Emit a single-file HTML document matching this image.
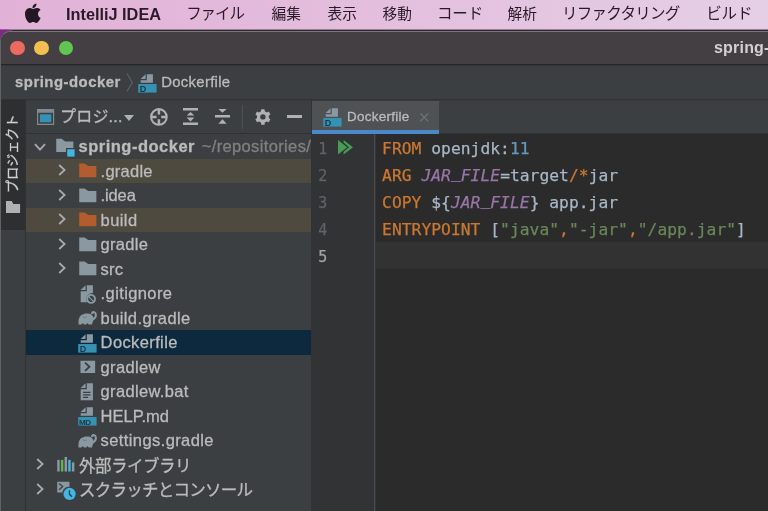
<!DOCTYPE html>
<html lang="ja">
<head>
<meta charset="utf-8">
<title>spring-docker – Dockerfile</title>
<style>
*{box-sizing:border-box;margin:0;padding:0}
html,body{width:768px;height:511px;overflow:hidden}
body{position:relative;background:#30282f;font-family:"Liberation Sans","Noto Sans CJK JP",sans-serif;color:#bbbbbb}
.abs,#in>div{position:absolute}
svg{position:absolute;overflow:visible}
#wall{left:0;top:29px;width:12px;height:14px;background:#7a2b82}
#mshadow{left:0;top:29px;width:768px;height:1px;background:linear-gradient(90deg,#a9559f 0,#a9559f 6px,#9c7c97 12px,#9c7c97 100%)}
#menubar{will-change:transform;left:0;top:0;width:768px;height:29px;background:linear-gradient(90deg,#e2b1d7 0%,#e3bcdc 40%,#e5cfe6 100%)}
#menubar span{position:absolute;top:0;height:29px;line-height:28px;font-size:14.7px;color:#2a1a28;white-space:nowrap}
#menubar .app{font-weight:bold;font-size:16.3px;left:66px;line-height:28px}
#menubar .kana{font-size:15.5px;letter-spacing:-.15px}
#win{left:0;top:31px;width:780px;height:490px;border-radius:10px 0 0 0;background:#3c3f41;overflow:hidden;border-left:1px solid #626364;border-top:1px solid #7a777a}
#in{will-change:transform;position:absolute;left:-1px;top:-32px;width:780px;height:520px}
#titlebar{left:0;top:32px;width:780px;height:32px;background:#433f43}
#titlebar .t{position:absolute;left:714px;top:0;line-height:32px;font-size:16px;font-weight:bold;color:#d4d1d4;white-space:nowrap;letter-spacing:.2px}
.dot{position:absolute;width:14.6px;height:14.6px;border-radius:50%;top:8.6px}
#tline{left:0;top:64px;width:780px;height:2px;background:linear-gradient(#272627 0,#272627 50%,#343537 50%,#343537 100%)}
#nav{left:0;top:66px;width:780px;height:33px;background:#3c3f41}
#nav .p{position:absolute;left:15px;top:-.5px;line-height:33px;font-size:14.9px;font-weight:bold;color:#bbbbbb;letter-spacing:.5px;white-space:nowrap}
#nav .f{position:absolute;left:161.2px;top:-.5px;line-height:33px;font-size:14.9px;color:#bbbbbb;letter-spacing:.3px}
#nline{left:0;top:99px;width:780px;height:2px;background:linear-gradient(#323232 0,#323232 50%,rgba(50,50,50,.4) 50%,rgba(50,50,50,.4) 100%)}
#tbline{left:439px;top:133px;width:340px;height:1px;background:#323232}
#stripe{left:1px;top:100px;width:24px;height:420px;background:#3c3f41}
#stripebtn{left:1px;top:100px;width:24px;height:130px;background:#2d2f30}
#sline{left:25px;top:100px;width:1px;height:420px;background:#323232}
#stripetxt{left:4px;top:193px;width:82px;height:17px;line-height:17px;font-size:13.1px;color:#d0d0d0;white-space:nowrap;transform-origin:0 0;transform:rotate(-90deg)}
#thead{left:26px;top:100px;width:285px;height:33px;background:#3c3f41}
#thead .ttl{position:absolute;left:34px;top:0;line-height:33px;font-size:16px;color:#bbbbbb;white-space:nowrap;letter-spacing:.2px}
#thline{left:26px;top:133px;width:285px;height:1px;background:#323232}
.rowbg{position:absolute;left:26px;width:285px;height:24.5px}
.rowbg.ex{background:#4e4a40}
.rowbg.sel{background:#0d293e}
.lbl{-webkit-text-stroke:.3px #bbbbbb;position:absolute;height:24.5px;line-height:24.5px;font-size:16.5px;color:#bbbbbb;white-space:nowrap;letter-spacing:.12px;margin-top:-0.2px}
.lbl.b{font-weight:bold;letter-spacing:.5px}
.lbl.j{letter-spacing:-.3px;margin-top:.8px;margin-left:.5px}
.gray{-webkit-text-stroke:.3px #808080;color:#808080;font-weight:normal;letter-spacing:.36px;margin-left:1.6px}
#split{left:311px;top:100px;width:1px;height:420px;background:#323232}
#tabs{left:312px;top:100px;width:470px;height:34px;background:#3c3f41}
#tab{left:312px;top:101px;width:127px;height:33px;background:#4e5254}
#tab .n{position:absolute;left:35px;top:0;line-height:31px;font-size:13.4px;color:#bbbbbb;letter-spacing:.3px}
#tabul{left:312px;top:130px;width:127px;height:4px;background:#4a88c7}
#gutter{left:312px;top:134px;width:63px;height:390px;background:#313335}
#gsep{left:374px;top:134px;width:2px;height:390px;background:linear-gradient(90deg,#4b4b4d 0,#4b4b4d 50%,#353536 50%,#353536 100%)}
#editor{left:375px;top:134px;width:400px;height:390px;background:#2b2b2b}
#caret{left:375px;top:242px;width:400px;height:27px;background:#323232}
.ln{position:absolute;left:318.3px;margin-top:1px;font-family:"DejaVu Sans Mono","Liberation Mono",monospace;font-size:15px;line-height:27px;height:27px;color:#606366}
.code{position:absolute;left:382.1px;font-family:"DejaVu Sans Mono","Liberation Mono",monospace;font-size:16.28px;letter-spacing:.04px;line-height:27px;height:27px;color:#a9b7c6;white-space:pre}
#nav span,#tab .n,#thead .ttl,#stripetxt{-webkit-text-stroke-width:.3px}
.code,.ln{-webkit-text-stroke-width:.25px}
.u{position:relative;top:-2.5px}
.k{color:#cc7832}.n{color:#6897bb}.v{color:#9876aa;font-style:italic}.s{color:#6a8759}
</style>
</head>
<body>
<div id="wall" class="abs"></div>
<div id="mshadow" class="abs"></div>
<div id="menubar" class="abs">
<svg style="left:23.800px;top:3.100px" width="18.200" height="21.400" viewBox="0 0 170 200"><path fill="#231822" d="M150.4 68.2c-1 .8-19.400 11.100-19.400 34.100 0 26.600 23.400 36 24.100 36.200-.1.600-3.700 12.900-12.300 25.400-7.700 11-15.700 22-27.900 22s-15.300-7.100-29.400-7.100c-13.700 0-18.600 7.300-29.700 7.300s-18.900-10.200-27.800-22.700C17.700 148.700 9.300 125 9.300 102.500c0-36.100 23.500-55.200 46.600-55.200 12.300 0 22.500 8.100 30.200 8.100 7.300 0 18.800-8.600 32.700-8.600 5.300 0 24.300.5 36.800 18.400zM107 34.500c5.800-6.900 9.900-16.400 9.900-25.900 0-1.300-.1-2.700-.3-3.700-9.400.4-20.600 6.300-27.300 14.100-5.300 6-10.200 15.600-10.200 25.200 0 1.400.2 2.900.3 3.300.6.100 1.600.2 2.500.2 8.400.1 19.100-5.600 25.100-13.200z"/></svg>
<span class="app">IntelliJ IDEA</span>
<span class="kana" style="left:186.200px;letter-spacing:-1.100px">ファイル</span>
<span style="left:271.5px">編集</span>
<span style="left:327.5px">表示</span>
<span style="left:382.5px">移動</span>
<span class="kana" style="left:437px">コード</span>
<span style="left:507.5px">解析</span>
<span class="kana" style="left:562px;letter-spacing:-.75px">リファクタリング</span>
<span class="kana" style="left:706.200px">ビルド</span>
</div>

<div id="win" class="abs"><div id="in">
<div id="titlebar">
<div class="dot" style="left:10px;background:#ed6a5e"></div>
<div class="dot" style="left:34.400px;background:#f5bf4f"></div>
<div class="dot" style="left:58.800px;background:#61c554"></div>
<div class="t">spring-docker – Dockerfile</div>
</div>
<div id="tline"></div>
<div id="nav">
<span class="p">spring-docker</span>
<svg style="left:126px;top:7px" width="8" height="19" viewBox="0 0 8 19"><path d="M1 .5L6.300 9.500L1 18.500" fill="none" stroke="#5f6365" stroke-width="1.100"/></svg>
<svg style="left:137.4px;top:6.7px" width="19.6" height="19.6" viewBox="0 0 16 16"><path fill="#8a98a2" d="M7 1L3 5H7Z"/><path fill="#8a98a2" d="M8 1V6H3V8H13V1Z"/><rect x="1" y="9" width="15" height="7" fill="#3592b3"/><text x="2.3" y="15.2" font-family="Liberation Sans,sans-serif" font-weight="bold" font-size="7.4" letter-spacing="0" fill="#1c3644">D</text></svg>
<span class="f">Dockerfile</span>
</div>

<div id="stripe"></div>
<div id="stripebtn"></div>
<div id="sline"></div>
<div id="stripetxt">プロジェクト</div>
<svg style="left:5.900px;top:200.800px" width="14.100" height="12" viewBox="0 0 14.100 12"><path fill="#afb1b3" d="M0 0H5.700L7.300 3.100H14.100V12H0Z"/></svg>

<div id="thead">
<span class="ttl">プロジ...</span>
</div>
<svg style="left:36.800px;top:109px" width="17.200" height="16" viewBox="0 0 17.200 16"><path fill="#7f8b91" fill-rule="evenodd" d="M0 0H17.200V16H0ZM1.200 3.700V14.800H16V3.700Z"/><rect x="2.900" y="5.300" width="11.400" height="8" fill="#3592b3"/></svg>
<svg style="left:124.300px;top:115.300px" width="10" height="6" viewBox="0 0 10 6"><path fill="#afb1b3" d="M0 0H10L5 6Z"/></svg>
<svg style="left:149.800px;top:107.600px" width="17.800" height="17.800" viewBox="-8.900 -8.900 17.800 17.800"><circle r="7.800" fill="none" stroke="#afb1b3" stroke-width="2.100"/><path stroke="#afb1b3" stroke-width="2.500" d="M0 -7.500V-2.300M0 7.500V2.300M-7.500 0H-2.300M7.500 0H2.300"/></svg>
<svg style="left:183px;top:108px" width="15" height="17" viewBox="0 0 15 17"><path fill="#afb1b3" d="M0 0H15V2.400H0ZM0 14.600H15V17H0ZM7.500 4L11.400 7.600H3.600ZM7.500 13.500L11.400 9.600H3.600Z"/></svg>
<svg style="left:215px;top:109.400px" width="15" height="15" viewBox="0 0 15 15"><path fill="#afb1b3" d="M0 6H15V8.400H0ZM7.500 3.800L11.600 0H3.400ZM7.500 10.200L11.600 14.700H3.400Z"/></svg>
<div style="left:242px;top:104.500px;width:1px;height:24.500px;background:#4e5052"></div>
<svg style="left:255px;top:108.700px" width="15.800" height="15.800" viewBox="-7.900 -7.900 15.800 15.800"><path fill="#afb1b3" fill-rule="evenodd" d="M-1.91 -5.69L-1.64 -7.73L1.64 -7.73L1.91 -5.69L3.97 -4.50L5.87 -5.29L7.51 -2.44L5.88 -1.19L5.88 1.19L7.51 2.44L5.87 5.29L3.97 4.50L1.91 5.69L1.64 7.73L-1.64 7.73L-1.91 5.69L-3.97 4.50L-5.87 5.29L-7.51 2.44L-5.88 1.19L-5.88 -1.19L-7.51 -2.44L-5.87 -5.29L-3.97 -4.50ZM2.70 0A2.70 2.70 0 1 0 -2.70 0A2.70 2.70 0 1 0 2.70 0Z"/></svg>
<div style="left:287.300px;top:115.300px;width:14.800px;height:2.500px;background:#afb1b3"></div>
<div id="thline"></div>

<svg style="left:33.6px;top:142.7px" width="12" height="8" viewBox="0 0 12 8"><path d="M1 1.200L6 6.600L11 1.200" fill="none" stroke="#a9abad" stroke-width="1.750"/></svg>
<svg style="left:55.4px;top:136.7px" width="19.6" height="19.6" viewBox="0 0 16 16"><path fill="#8a98a2" d="M1 1.500H5.3L8.4 3.600H15V9H9V12.300H1Z"/><rect x="10" y="10" width="6" height="6" fill="#40b6e0"/></svg>
<div class="lbl b" style="left:78.5px;top:134.25px">spring-docker <span class="gray">~/repositories/spring-docker</span></div>
<div class="rowbg ex" style="top:158.75px"></div>
<svg style="left:57.7px;top:164.2px" width="8" height="12" viewBox="0 0 8 12"><path d="M1.200 1L6.600 6L1.200 11" fill="none" stroke="#a9abad" stroke-width="1.750"/></svg>
<svg style="left:77.5px;top:161.2px" width="19.6" height="19.6" viewBox="0 0 16 16"><path fill="#b35d2f" d="M1 2H5.3L8.4 4.1H15V13.2H1Z"/></svg>
<div class="lbl" style="left:100.6px;top:158.75px;letter-spacing:0.25px">.gradle</div>
<svg style="left:57.7px;top:188.7px" width="8" height="12" viewBox="0 0 8 12"><path d="M1.200 1L6.600 6L1.200 11" fill="none" stroke="#a9abad" stroke-width="1.750"/></svg>
<svg style="left:77.5px;top:185.7px" width="19.6" height="19.6" viewBox="0 0 16 16"><path fill="#8a98a2" d="M1 2H5.3L8.4 4.1H15V13.2H1Z"/></svg>
<div class="lbl" style="left:100.6px;top:183.25px;letter-spacing:-0.14px">.idea</div>
<div class="rowbg ex" style="top:207.75px"></div>
<svg style="left:57.7px;top:213.2px" width="8" height="12" viewBox="0 0 8 12"><path d="M1.200 1L6.600 6L1.200 11" fill="none" stroke="#a9abad" stroke-width="1.750"/></svg>
<svg style="left:77.5px;top:210.2px" width="19.6" height="19.6" viewBox="0 0 16 16"><path fill="#b35d2f" d="M1 2H5.3L8.4 4.1H15V13.2H1Z"/></svg>
<div class="lbl" style="left:100.6px;top:207.75px;letter-spacing:0.42px">build</div>
<svg style="left:57.7px;top:237.7px" width="8" height="12" viewBox="0 0 8 12"><path d="M1.200 1L6.600 6L1.200 11" fill="none" stroke="#a9abad" stroke-width="1.750"/></svg>
<svg style="left:77.5px;top:234.7px" width="19.6" height="19.6" viewBox="0 0 16 16"><path fill="#8a98a2" d="M1 2H5.3L8.4 4.1H15V13.2H1Z"/></svg>
<div class="lbl" style="left:100.6px;top:232.25px;letter-spacing:0.27px">gradle</div>
<svg style="left:57.7px;top:262.2px" width="8" height="12" viewBox="0 0 8 12"><path d="M1.200 1L6.600 6L1.200 11" fill="none" stroke="#a9abad" stroke-width="1.750"/></svg>
<svg style="left:77.5px;top:259.2px" width="19.6" height="19.6" viewBox="0 0 16 16"><path fill="#8a98a2" d="M1 2H5.3L8.4 4.1H15V13.2H1Z"/></svg>
<div class="lbl" style="left:100.6px;top:256.75px;letter-spacing:0.22px">src</div>
<svg style="left:77px;top:283.7px" width="19.6" height="19.6" viewBox="0 0 16 16"><path fill="#8a98a2" d="M7 1L3 5H7Z"/><path fill="#8a98a2" d="M8 1V6H3V15H8.2A5.200 5.200 0 0 1 13 7.300V1Z"/><path fill="#8a98a2" fill-rule="evenodd" transform="translate(-.5 .2)" d="M12 8A4 4 0 1 0 12 16A4 4 0 1 0 12 8ZM10.622 9.914A2.500 2.500 0 0 1 14.086 13.378ZM13.378 14.086A2.500 2.500 0 0 1 9.914 10.622Z"/></svg>
<div class="lbl" style="left:100.6px;top:281.25px;letter-spacing:0.39px">.gitignore</div>
<svg style="left:77.5px;top:308.2px" width="19.6" height="19.6" viewBox="0 0 16 16"><path fill="#8a98a2" d="M0.40 13.53L0.40 11.04C0.40 8.17 1.74 5.49 4.81 4.80C7.11 4.26 9.41 4.26 10.63 5.18C11.90 6.06 13.05 7.59 12.47 9.70L11.40 13.53L8.64 13.53Q7.68 11.43 6.72 13.53L4.81 13.53Q3.85 11.43 2.89 13.53Z"/><path d="M12.17 9.13C14.20 7.98 15.23 6.44 14.89 4.53C14.58 2.80 12.66 2.34 11.82 3.68" transform="translate(-.35 .5)" fill="none" stroke="#8a98a2" stroke-width="1.700" stroke-linecap="round"/><path d="M3.66 7.02Q5.38 8.60 7.11 7.21" stroke="#566068" stroke-width=".45" fill="none"/></svg>
<div class="lbl" style="left:100.6px;top:305.75px;letter-spacing:0.39px">build.gradle</div>
<div class="rowbg sel" style="top:330.25px"></div>
<svg style="left:76.9px;top:332.7px" width="19.6" height="19.6" viewBox="0 0 16 16"><path fill="#8a98a2" d="M7 1L3 5H7Z"/><path fill="#8a98a2" d="M8 1V6H3V8H13V1Z"/><rect x="1" y="9" width="15" height="7" fill="#3592b3"/><text x="2.3" y="15.2" font-family="Liberation Sans,sans-serif" font-weight="bold" font-size="7.4" letter-spacing="0" fill="#1c3644">D</text></svg>
<div class="lbl" style="left:100.6px;top:330.25px;letter-spacing:0.38px">Dockerfile</div>
<svg style="left:77.5px;top:357.2px" width="19.6" height="19.6" viewBox="0 0 16 16"><path fill="#8a98a2" fill-rule="evenodd" d="M2 3H14V13H2ZM5.2 5.2L8.2 8L5.2 10.800L6.300 11.900L10.400 8L6.300 4.100Z"/></svg>
<div class="lbl" style="left:100.6px;top:354.75px;letter-spacing:0.32px">gradlew</div>
<svg style="left:77px;top:381.7px" width="19.6" height="19.6" viewBox="0 0 16 16"><path fill="#8a98a2" d="M7 1L3 5H7Z"/><path fill="#8a98a2" fill-rule="evenodd" d="M8 1V6H3V15H13V1ZM5 8H11V9H5ZM5 10H11V11H5ZM5 12H9V13H5Z"/></svg>
<div class="lbl" style="left:100.6px;top:379.25px;letter-spacing:0.34px">gradlew.bat</div>
<svg style="left:76.9px;top:406.2px" width="19.6" height="19.6" viewBox="0 0 16 16"><path fill="#8a98a2" d="M7 1L3 5H7Z"/><path fill="#8a98a2" d="M8 1V6H3V8H13V1Z"/><rect x="1" y="9" width="15" height="7" fill="#3592b3"/><text x="1.6" y="15.2" font-family="Liberation Sans,sans-serif" font-weight="bold" font-size="6.6" letter-spacing="-0.35" fill="#1c3644">MD</text></svg>
<div class="lbl" style="left:100.6px;top:403.75px;letter-spacing:-0.02px">HELP.md</div>
<svg style="left:77.5px;top:430.7px" width="19.6" height="19.6" viewBox="0 0 16 16"><path fill="#8a98a2" d="M0.40 13.53L0.40 11.04C0.40 8.17 1.74 5.49 4.81 4.80C7.11 4.26 9.41 4.26 10.63 5.18C11.90 6.06 13.05 7.59 12.47 9.70L11.40 13.53L8.64 13.53Q7.68 11.43 6.72 13.53L4.81 13.53Q3.85 11.43 2.89 13.53Z"/><path d="M12.17 9.13C14.20 7.98 15.23 6.44 14.89 4.53C14.58 2.80 12.66 2.34 11.82 3.68" transform="translate(-.35 .5)" fill="none" stroke="#8a98a2" stroke-width="1.700" stroke-linecap="round"/><path d="M3.66 7.02Q5.38 8.60 7.11 7.21" stroke="#566068" stroke-width=".45" fill="none"/></svg>
<div class="lbl" style="left:100.6px;top:428.25px;letter-spacing:0.4px">settings.gradle</div>
<svg style="left:35.6px;top:458.2px" width="8" height="12" viewBox="0 0 8 12"><path d="M1.200 1L6.600 6L1.200 11" fill="none" stroke="#a9abad" stroke-width="1.750"/></svg>
<svg style="left:55.8px;top:455.2px" width="19.6" height="19.6" viewBox="0 0 16 16"><rect x="1" y="4" width="2" height="9.500" fill="#8a98a2"/><rect x="4" y="4" width="2" height="9.500" fill="#62b543"/><rect x="7" y="1.600" width="2" height="11.900" fill="#8a98a2"/><rect x="10" y="4" width="2" height="9.500" fill="#40b6e0"/><rect x="13" y="6" width="2" height="7.500" fill="#8a98a2"/></svg>
<div class="lbl j" style="left:78.5px;top:452.75px;letter-spacing:-0.51px">外部ライブラリ</div>
<svg style="left:35.6px;top:482.7px" width="8" height="12" viewBox="0 0 8 12"><path d="M1.200 1L6.600 6L1.200 11" fill="none" stroke="#a9abad" stroke-width="1.750"/></svg>
<svg style="left:55.8px;top:479.7px" width="19.6" height="19.6" viewBox="0 0 16 16"><path fill="#8a98a2" fill-rule="evenodd" d="M1 1.500H11V5.600A6 6 0 0 0 5.100 10.300H1ZM2.200 3.200L4.600 5.400L2.200 7.600L3 8.400L6.200 5.400L3 2.400Z"/><circle cx="11.100" cy="11.400" r="5" fill="#40b6e0"/><path d="M11 8.300V11.600L13 13.600" fill="none" stroke="#2b3a44" stroke-width="1.100"/></svg>
<div class="lbl j" style="left:78.5px;top:477.25px;letter-spacing:-0.74px">スクラッチとコンソール</div>

<div id="split"></div>
<div id="tabs"></div>
<div id="tab"><span class="n">Dockerfile</span></div>
<svg style="left:322.2px;top:106.8px" width="19.6" height="19.6" viewBox="0 0 16 16"><path fill="#8a98a2" d="M7 1L3 5H7Z"/><path fill="#8a98a2" d="M8 1V6H3V8H13V1Z"/><rect x="1" y="9" width="15" height="7" fill="#3592b3"/><text x="2.3" y="15.2" font-family="Liberation Sans,sans-serif" font-weight="bold" font-size="7.4" letter-spacing="0" fill="#1c3644">D</text></svg>
<svg style="left:420px;top:112.600px" width="8.600" height="8.600" viewBox="0 0 8.600 8.600"><path d="M.3 .3L8.300 8.300M8.300 .3L.3 8.300" stroke="#74777a" stroke-width="1.050" fill="none"/></svg>
<div id="tabul"></div>
<div id="tbline"></div>
<div id="nline"></div>

<div id="gutter"></div>
<div id="editor"></div>
<div id="caret"></div>
<div id="gsep"></div>
<div class="ln" style="top:134.5px">1</div><div class="ln" style="top:161.5px">2</div><div class="ln" style="top:188.5px">3</div><div class="ln" style="top:215.5px">4</div><div class="ln" style="top:242.5px;color:#a4a3a3">5</div>
<svg style="left:338px;top:140.400px" width="15" height="14.400" viewBox="0 0 15 14.400"><path fill="#499c54" d="M0 0L9.200 7.200L0 14.400Z"/><path fill="#499c54" d="M5.600 0L15 7.200L5.600 14.400V11.800L11 7.200L5.600 2.600Z"/></svg>
<div class="code" style="top:134.5px"><span class="k">FROM</span> openjdk:<span class="n">11</span></div>
<div class="code" style="top:161.5px"><span class="k">ARG</span> <span class="v">JAR<span class="u">_</span>FILE</span>=target<span class="k">/*</span>jar</div>
<div class="code" style="top:188.5px"><span class="k">COPY</span> ${<span class="v">JAR<span class="u">_</span>FILE</span>} app.jar</div>
<div class="code" style="top:215.5px"><span class="k">ENTRYPOINT</span> [<span class="s">"java"</span><span class="k">,</span><span class="s">"-jar"</span><span class="k">,</span><span class="s">"/app.jar"</span>]</div>
</div></div>
</body>
</html>
